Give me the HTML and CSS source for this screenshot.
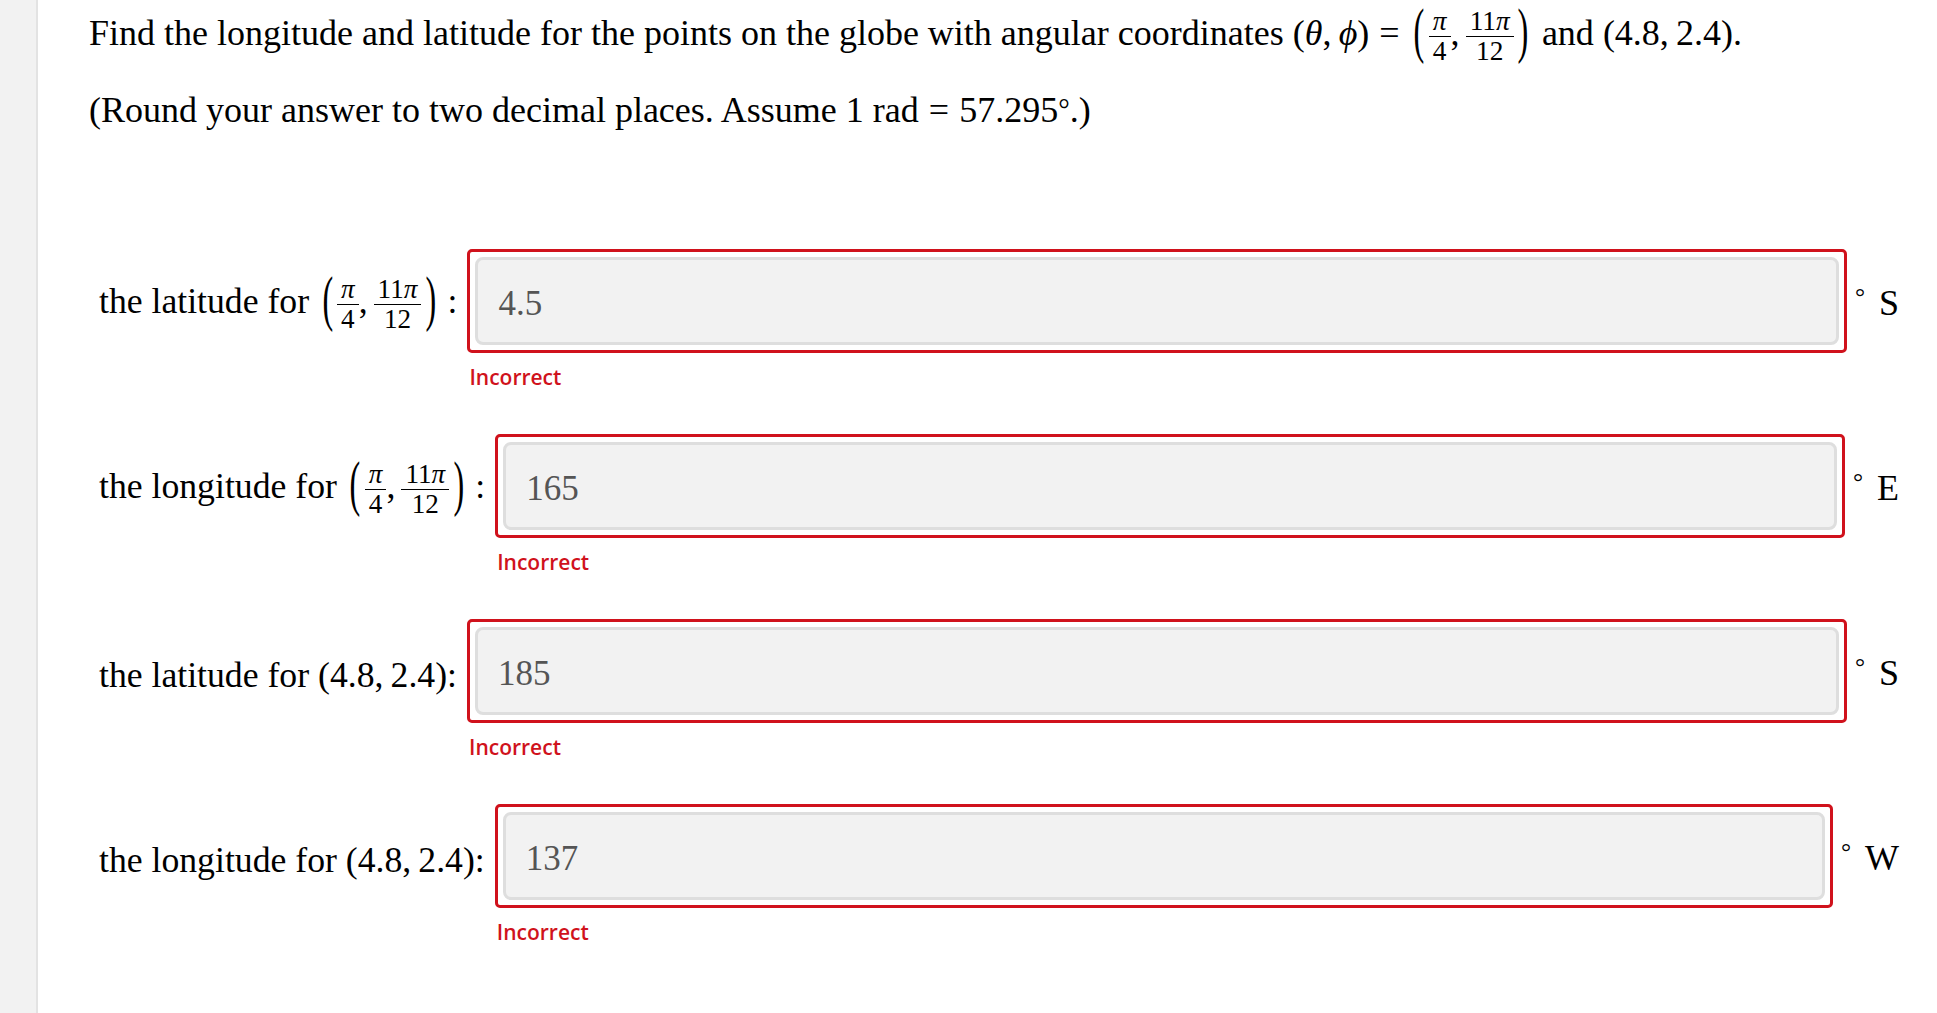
FILE: index.html
```html
<!DOCTYPE html>
<html lang="en">
<head>
<meta charset="utf-8">
<title>Longitude and latitude</title>
<link rel="stylesheet" href="styles.css">
</head>
<body>
<div class="page">
  <aside class="sidebar"></aside>
  <main class="content">
    <p class="q q1">Find the longitude and latitude for the points on the globe with angular coordinates <span class="m">(<i>θ</i>,&thinsp;<i>ϕ</i>)<span class="rel">=</span><span class="bp">(</span><span class="frac"><span class="num"><i>π</i></span><span class="den">4</span></span><span class="cm">,</span><span class="frac"><span class="num">11<i>π</i></span><span class="den">12</span></span><span class="bp">)</span></span> and <span class="m">(4.8,&thinsp;2.4)</span>.</p>
    <p class="q q2">(Round your answer to two decimal places. Assume 1 rad<span class="rel">=</span>57.295<span class="sdeg">°</span>.)</p>

    <div class="qrow first">
      <div class="label">the latitude for <span class="m"><span class="bp">(</span><span class="frac"><span class="num"><i>π</i></span><span class="den">4</span></span><span class="cm">,</span><span class="frac"><span class="num">11<i>π</i></span><span class="den">12</span></span><span class="bp">)</span><span class="colon">:</span></span></div>
      <div class="answer"><div class="field">4.5</div></div>
      <div class="unit"><span class="deg">°</span>S</div>
      <div class="feedback">Incorrect</div>
    </div>

    <div class="qrow">
      <div class="label">the longitude for <span class="m"><span class="bp">(</span><span class="frac"><span class="num"><i>π</i></span><span class="den">4</span></span><span class="cm">,</span><span class="frac"><span class="num">11<i>π</i></span><span class="den">12</span></span><span class="bp">)</span><span class="colon">:</span></span></div>
      <div class="answer"><div class="field">165</div></div>
      <div class="unit"><span class="deg">°</span>E</div>
      <div class="feedback">Incorrect</div>
    </div>

    <div class="qrow">
      <div class="label">the latitude for <span class="m">(4.8,&thinsp;2.4)</span>:</div>
      <div class="answer"><div class="field">185</div></div>
      <div class="unit"><span class="deg">°</span>S</div>
      <div class="feedback">Incorrect</div>
    </div>

    <div class="qrow">
      <div class="label">the longitude for <span class="m">(4.8,&thinsp;2.4)</span>:</div>
      <div class="answer"><div class="field">137</div></div>
      <div class="unit"><span class="deg">°</span>W</div>
      <div class="feedback">Incorrect</div>
    </div>
  </main>
</div>
</body>
</html>
```

FILE: styles.css
```css
html, body {
  margin: 0;
  padding: 0;
  background: #ffffff;
}

body {
  font-family: "Liberation Serif", "Times New Roman", serif;
  font-size: 36px;
  color: #000;
}

.page {
  display: flex;
  min-height: 1013px;
}

.sidebar {
  width: 36px;
  flex: none;
  background: #f2f2f2;
  border-right: 2px solid #e3e3e3;
}

.content {
  flex: 1;
  padding: 0 38px 0 51px;
}

.q {
  margin: 0;
  line-height: 44px;
  white-space: nowrap;
}

.q1 {
  padding-top: 8px;
}

.q2 {
  margin-top: 21px;
}

.m i {
  font-style: italic;
}

.rel {
  margin: 0 0.278em;
}

.colon {
  margin: 0 0 0 0.2em;
}

.cm {
  margin-right: 0.17em;
}

.sdeg {
  font-size: 0.8em;
  vertical-align: 0.12em;
}

.bp {
  display: inline-block;
  line-height: 0.8;
  padding-bottom: 0.205em;
  transform: scale(0.9, 1.72);
  transform-origin: 50% 50%;
  margin: 0 0.1em;
}

.frac {
  display: inline-flex;
  flex-direction: column;
  align-items: stretch;
  vertical-align: middle;
  font-size: 0.76em;
  line-height: 1;
  text-align: center;
}

.num {
  border-bottom: 1px solid #000;
  padding: 0 4px 1px;
}

.den {
  padding-top: 1px;
}

.qrow {
  display: grid;
  grid-template-columns: auto 1fr auto;
  align-items: center;
  margin-left: 10px;
  margin-top: 43px;
}

.qrow.first {
  margin-top: 117px;
}

.label {
  white-space: nowrap;
  margin-right: 10px;
  padding-top: 7px;
  font-size: 35.7px;
}

.answer {
  border: 3px solid #d0121c;
  border-radius: 5px;
  padding: 5px;
}

.field {
  box-sizing: border-box;
  height: 88px;
  border: 3px solid #dedede;
  border-radius: 8px;
  background: #f2f2f2;
  color: #555;
  font-size: 35px;
  padding-left: 20px;
  padding-top: 5px;
  display: flex;
  align-items: center;
}

.unit {
  margin-left: 8px;
  padding-top: 4px;
  white-space: nowrap;
}

.deg {
  display: inline-block;
  font-size: 0.7em;
  margin-right: 14px;
  vertical-align: 0.4em;
  line-height: 1;
}

.feedback {
  grid-column: 2;
  margin-top: 10px;
  height: 28px;
  line-height: 28px;
  font-family: "Open Sans", "Noto Sans", sans-serif;
  font-weight: 600;
  font-size: 21px;
  color: #d0121c;
  padding-left: 2px;
}
```
